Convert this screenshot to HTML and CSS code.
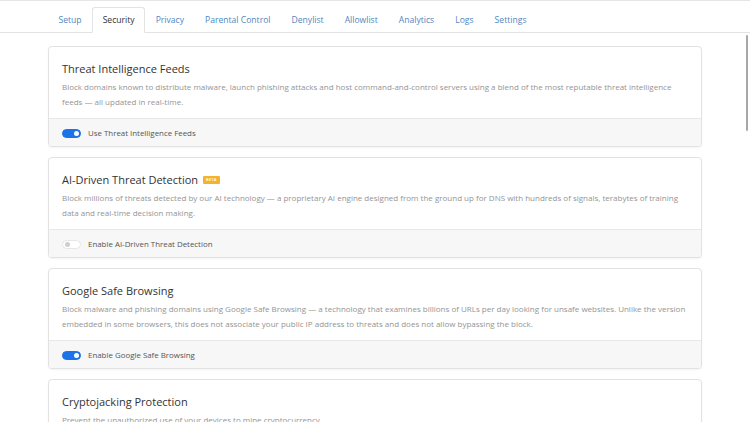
FILE: index.html
```html
<!DOCTYPE html>
<html lang="en">
<head>
<meta charset="utf-8">
<title>Security</title>
<link rel="stylesheet" href="styles.css">
</head>
<body>
<div class="page">
  <nav class="tabbar">
    <ul class="tabs">
      <li class="tab"><a href="#">Setup</a></li>
      <li class="tab active"><a href="#">Security</a></li>
      <li class="tab"><a href="#">Privacy</a></li>
      <li class="tab"><a href="#">Parental Control</a></li>
      <li class="tab"><a href="#">Denylist</a></li>
      <li class="tab"><a href="#">Allowlist</a></li>
      <li class="tab"><a href="#">Analytics</a></li>
      <li class="tab"><a href="#">Logs</a></li>
      <li class="tab"><a href="#">Settings</a></li>
    </ul>
  </nav>

  <main class="content">
    <section class="card">
      <div class="card-body">
        <h5 class="card-title">Threat Intelligence Feeds</h5>
        <p class="card-text">Block domains known to distribute malware, launch phishing attacks and host command-and-control servers using a blend of the most reputable threat intelligence feeds — all updated in real-time.</p>
      </div>
      <div class="card-footer">
        <label class="switch"><span class="track on"><span class="knob"></span></span><span class="switch-label">Use Threat Intelligence Feeds</span></label>
      </div>
    </section>

    <section class="card">
      <div class="card-body">
        <h5 class="card-title">AI-Driven Threat Detection <span class="badge">BETA</span></h5>
        <p class="card-text">Block millions of threats detected by our AI technology — a proprietary AI engine designed from the ground up for DNS with hundreds of signals, terabytes of training data and real-time decision making.</p>
      </div>
      <div class="card-footer">
        <label class="switch"><span class="track off"><span class="knob"></span></span><span class="switch-label">Enable AI-Driven Threat Detection</span></label>
      </div>
    </section>

    <section class="card">
      <div class="card-body">
        <h5 class="card-title">Google Safe Browsing</h5>
        <p class="card-text">Block malware and phishing domains using Google Safe Browsing — a technology that examines billions of URLs per day looking for unsafe websites. Unlike the version embedded in some browsers, this does not associate your public IP address to threats and does not allow bypassing the block.</p>
      </div>
      <div class="card-footer">
        <label class="switch"><span class="track on"><span class="knob"></span></span><span class="switch-label">Enable Google Safe Browsing</span></label>
      </div>
    </section>

    <section class="card">
      <div class="card-body">
        <h5 class="card-title">Cryptojacking Protection</h5>
        <p class="card-text">Prevent the unauthorized use of your devices to mine cryptocurrency.</p>
      </div>
      <div class="card-footer">
        <label class="switch"><span class="track on"><span class="knob"></span></span><span class="switch-label">Enable Cryptojacking Protection</span></label>
      </div>
    </section>
  </main>
  <div class="scroll-thumb"></div>
</div>
</body>
</html>
```

FILE: styles.css
```css
html, body {
  margin: 0;
  padding: 0;
  height: 100%;
  overflow: hidden;
  background: #ffffff;
}

body {
  font-family: "Open Sans", "Noto Sans", sans-serif;
  color: #333;
}

.page {
  position: relative;
  height: 100%;
  border-top: 1px solid #e6e6e6;
  box-sizing: border-box;
}

.tabbar {
  border-bottom: 1px solid #e3e3e3;
  padding: 6px 48px 0;
}

.tabs {
  display: flex;
  list-style: none;
  margin: 0 0 -1px;
  padding: 0;
}

.tab a {
  display: block;
  padding: 4px 9.5px 4px;
  line-height: 16px;
  font-size: 8.6px;
  color: #4f87c2;
  text-decoration: none;
  border: 1px solid transparent;
  border-radius: 3px 3px 0 0;
}

.tab.active a {
  color: #333;
  background: #fff;
  border-color: #e3e3e3 #e3e3e3 #fff;
}

.content {
  padding: 13px 48px 0;
  display: flex;
  flex-direction: column;
  gap: 10px;
}

.card {
  border: 1px solid #e2e2e2;
  border-radius: 4px;
  background: #fff;
  box-shadow: 0 1px 2px rgba(0, 0, 0, 0.05);
  overflow: hidden;
}

.card-body {
  padding: 13px 13px 9px;
}

.card-title {
  margin: 0 0 1px;
  font-size: 11px;
  line-height: 18px;
  font-weight: 400;
  color: #333;
  display: flex;
  align-items: center;
}

.badge {
  display: inline-block;
  margin-left: 5px;
  background: #f4b22e;
  color: #fff;
  font-size: 4px;
  line-height: 8px;
  height: 8px;
  padding: 0 3px;
  border-radius: 1px;
  font-weight: 600;
  letter-spacing: 0.2px;
}

.card-text {
  margin: 0;
  font-size: 8px;
  line-height: 15px;
  color: #949494;
}

.card-footer {
  border-top: 1px solid #e8e8e8;
  background: #f7f7f7;
  padding: 6px 13px 5px;
}

.switch {
  display: flex;
  align-items: center;
  gap: 7px;
  height: 16px;
}

.switch-label {
  font-size: 7.9px;
  color: #555;
  line-height: 16px;
}

.track {
  position: relative;
  width: 19px;
  height: 9px;
  border-radius: 5px;
  box-sizing: border-box;
  flex: none;
}

.track.on {
  background: #1a73e8;
  border: 1px solid #1a73e8;
}

.track.off {
  background: #fff;
  border: 1px solid #e6e6e6;
}

.knob {
  position: absolute;
  top: 1px;
  width: 5px;
  height: 5px;
  border-radius: 50%;
}

.track.on .knob {
  right: 1.5px;
  background: #fff;
}

.track.off .knob {
  left: 1.5px;
  background: #cfcfcf;
}

.scroll-thumb {
  position: absolute;
  right: 2px;
  top: 34px;
  width: 2px;
  height: 96px;
  background: #a8a8a8;
  border-radius: 1px;
}
```
